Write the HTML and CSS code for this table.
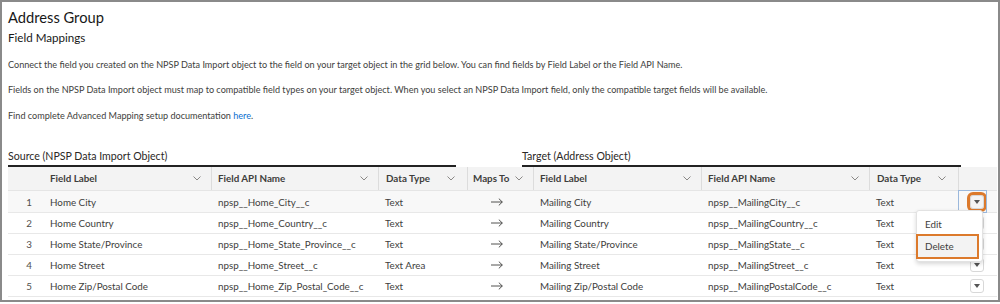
FILE: index.html
```html
<!DOCTYPE html>
<html lang="en">
<head>
<meta charset="utf-8">
<title>Address Group</title>
<link rel="stylesheet" href="styles.css">
</head>
<body>
<div class="frame">
  <h1 class="title">Address Group</h1>
  <h2 class="subtitle">Field Mappings</h2>
  <p class="desc">Connect the field you created on the NPSP Data Import object to the field on your target object in the grid below. You can find fields by Field Label or the Field API Name.</p>
  <p class="desc">Fields on the NPSP Data Import object must map to compatible field types on your target object. When you select an NPSP Data Import field, only the compatible target fields will be available.</p>
  <p class="desc">Find complete Advanced Mapping setup documentation <a class="link" href="#">here</a>.</p>

  <div class="groups">
    <div class="group group-source">Source (NPSP Data Import Object)</div>
    <div class="group group-target">Target (Address Object)</div>
  </div>

  <div class="table-wrap">
    <table class="grid">
      <colgroup>
        <col class="w-num"><col class="w-label"><col class="w-api"><col class="w-type"><col class="w-maps"><col class="w-label"><col class="w-api2"><col class="w-type"><col class="w-act">
      </colgroup>
      <thead>
        <tr>
          <th class="th-num"></th>
          <th><div class="th-in"><span>Field Label</span><svg class="chev" width="8" height="5" viewBox="0 0 8 5"><polyline points="0.5,0.5 4,4 7.5,0.5"/></svg></div></th>
          <th><div class="th-in"><span>Field API Name</span><svg class="chev" width="8" height="5" viewBox="0 0 8 5"><polyline points="0.5,0.5 4,4 7.5,0.5"/></svg></div></th>
          <th><div class="th-in th-type"><span>Data Type</span><svg class="chev" width="8" height="5" viewBox="0 0 8 5"><polyline points="0.5,0.5 4,4 7.5,0.5"/></svg></div></th>
          <th><div class="th-in th-maps"><span>Maps To</span><svg class="chev" width="8" height="5" viewBox="0 0 8 5"><polyline points="0.5,0.5 4,4 7.5,0.5"/></svg></div></th>
          <th><div class="th-in"><span>Field Label</span><svg class="chev" width="8" height="5" viewBox="0 0 8 5"><polyline points="0.5,0.5 4,4 7.5,0.5"/></svg></div></th>
          <th><div class="th-in"><span>Field API Name</span><svg class="chev" width="8" height="5" viewBox="0 0 8 5"><polyline points="0.5,0.5 4,4 7.5,0.5"/></svg></div></th>
          <th><div class="th-in th-type"><span>Data Type</span><svg class="chev" width="8" height="5" viewBox="0 0 8 5"><polyline points="0.5,0.5 4,4 7.5,0.5"/></svg></div></th>
          <th class="th-act"></th>
        </tr>
      </thead>
      <tbody>
        <tr class="row-active">
          <td class="num">1</td>
          <td>Home City</td>
          <td>npsp__Home_City__c</td>
          <td>Text</td>
          <td class="maps"><svg class="arrow" width="12" height="8" viewBox="0 0 12 8"><line x1="0" y1="4" x2="11.3" y2="4"/><polyline points="7.8,0.6 11.3,4 7.8,7.4"/></svg></td>
          <td>Mailing City</td>
          <td>npsp__MailingCity__c</td>
          <td>Text</td>
          <td class="act"><div class="act-in act-focus"><span class="btn btn-hl"><span class="tri"></span></span></div></td>
        </tr>
        <tr>
          <td class="num">2</td>
          <td>Home Country</td>
          <td>npsp__Home_Country__c</td>
          <td>Text</td>
          <td class="maps"><svg class="arrow" width="12" height="8" viewBox="0 0 12 8"><line x1="0" y1="4" x2="11.3" y2="4"/><polyline points="7.8,0.6 11.3,4 7.8,7.4"/></svg></td>
          <td>Mailing Country</td>
          <td>npsp__MailingCountry__c</td>
          <td>Text</td>
          <td class="act"><div class="act-in"><span class="btn"><span class="tri"></span></span></div></td>
        </tr>
        <tr>
          <td class="num">3</td>
          <td>Home State/Province</td>
          <td>npsp__Home_State_Province__c</td>
          <td>Text</td>
          <td class="maps"><svg class="arrow" width="12" height="8" viewBox="0 0 12 8"><line x1="0" y1="4" x2="11.3" y2="4"/><polyline points="7.8,0.6 11.3,4 7.8,7.4"/></svg></td>
          <td>Mailing State/Province</td>
          <td>npsp__MailingState__c</td>
          <td>Text</td>
          <td class="act"><div class="act-in"><span class="btn"><span class="tri"></span></span></div></td>
        </tr>
        <tr>
          <td class="num">4</td>
          <td>Home Street</td>
          <td>npsp__Home_Street__c</td>
          <td>Text Area</td>
          <td class="maps"><svg class="arrow" width="12" height="8" viewBox="0 0 12 8"><line x1="0" y1="4" x2="11.3" y2="4"/><polyline points="7.8,0.6 11.3,4 7.8,7.4"/></svg></td>
          <td>Mailing Street</td>
          <td>npsp__MailingStreet__c</td>
          <td>Text</td>
          <td class="act"><div class="act-in"><span class="btn"><span class="tri"></span></span></div></td>
        </tr>
        <tr>
          <td class="num">5</td>
          <td>Home Zip/Postal Code</td>
          <td>npsp__Home_Zip_Postal_Code__c</td>
          <td>Text</td>
          <td class="maps"><svg class="arrow" width="12" height="8" viewBox="0 0 12 8"><line x1="0" y1="4" x2="11.3" y2="4"/><polyline points="7.8,0.6 11.3,4 7.8,7.4"/></svg></td>
          <td>Mailing Zip/Postal Code</td>
          <td>npsp__MailingPostalCode__c</td>
          <td>Text</td>
          <td class="act"><div class="act-in"><span class="btn"><span class="tri"></span></span></div></td>
        </tr>
      </tbody>
    </table>

    <div class="menu">
      <div class="menu-item">Edit</div>
      <div class="menu-item menu-item-hl">Delete</div>
    </div>
  </div>
</div>
</body>
</html>
```

FILE: styles.css
```css
* {
  box-sizing: border-box;
}

html, body {
  margin: 0;
  padding: 0;
  background: #ffffff;
}

body {
  font-family: "Lato", "Liberation Sans", Arial, sans-serif;
  color: #3e3e3c;
}

.frame {
  width: 1000px;
  height: 302px;
  border: 2px solid #8a8a8a;
  padding: 5px 1px 0 6px;
  overflow: hidden;
}

.title {
  margin: 0;
  font-size: 14.7px;
  line-height: 20px;
  font-weight: 400;
  color: #181818;
}

.subtitle {
  margin: 3px 0 0;
  font-size: 11.6px;
  line-height: 16px;
  font-weight: 400;
  color: #181818;
}

.desc {
  margin: 11.5px 0 0;
  font-size: 9.1px;
  line-height: 14px;
  color: #3e3e3c;
}

.link {
  color: #0b6fcf;
  text-decoration: none;
}

.groups {
  display: flex;
  margin-top: 26px;
}

.group {
  font-size: 10.6px;
  line-height: 14px;
  padding-bottom: 2px;
  border-bottom: 2px solid #222222;
  color: #2b2826;
}

.group-source {
  width: 448px;
}

.group-target {
  margin-left: 66px;
  width: 439px;
}

.table-wrap {
  position: relative;
}

.grid {
  width: 989px;
  border-collapse: collapse;
  table-layout: fixed;
  font-size: 9.8px;
  color: #3e3e3c;
}

.w-num { width: 36px; }
.w-label { width: 168px; }
.w-api { width: 167px; }
.w-api2 { width: 168px; }
.w-type { width: 89px; }
.w-maps { width: 66px; }
.w-act { width: 38px; }

.grid thead th {
  height: 24px;
  padding: 0;
  background: #f3f3f3;
  border-bottom: 1px solid #e5e5e5;
  text-align: left;
  font-weight: 700;
  color: #3e3e3c;
}

.th-in {
  display: flex;
  align-items: center;
  justify-content: space-between;
  height: 23px;
  padding: 0 10px 0 6px;
  border-right: 1px solid #dcdcdc;
}

.th-type {
  padding-right: 12px;
  padding-left: 7px;
}

.th-maps {
  padding-left: 5px;
  padding-right: 10px;
}

.chev {
  flex: none;
  fill: none;
  stroke: #8a8886;
  stroke-width: 1;
}

.grid tbody td {
  height: 21px;
  padding: 0 6px;
  border-bottom: 1px solid #e8e8e8;
  white-space: nowrap;
  overflow: visible;
}

.row-active td {
  background: #f8f8f8;
}

.grid tbody td.num {
  text-align: right;
  padding-right: 12px;
  color: #514f4d;
}

.grid tbody td.maps {
  padding-left: 23px;
}

.arrow {
  display: block;
  fill: none;
  stroke: #3e3e3c;
  stroke-width: 0.9;
}

.grid tbody td.act {
  padding: 0;
}

.act-in {
  width: 27px;
  height: 20px;
  display: flex;
  align-items: center;
  padding-left: 11px;
}

.act-focus {
  outline: 1px solid #9bb8dc;
  height: 21px;
}

.btn {
  width: 14px;
  height: 14px;
  border: 1px solid #d8d8d8;
  border-radius: 3px;
  background: #ffffff;
  display: flex;
  align-items: center;
  justify-content: center;
  flex: none;
}

.btn-hl {
  outline: 3px solid #dc7a2c;
  background: #f4f4f4;
}

.tri {
  width: 0;
  height: 0;
  border-left: 3px solid transparent;
  border-right: 3px solid transparent;
  border-top: 4px solid #555555;
}

.menu {
  position: absolute;
  left: 908px;
  top: 43px;
  width: 67px;
  padding: 3px 0 2px;
  background: #ffffff;
  border: 1px solid #e2e2e2;
  border-radius: 3px;
  box-shadow: 0 2px 4px rgba(0, 0, 0, 0.16);
  font-size: 9.8px;
  color: #3e3e3c;
}

.menu-item {
  height: 20px;
  line-height: 20px;
  padding-left: 8px;
}

.menu-item-hl {
  height: 25px;
  line-height: 21px;
  margin-right: 3px;
  margin-left: -1px;
  padding-left: 7px;
  border: 2px solid #dc7a2c;
  background: #f3f3f3;
}
```
